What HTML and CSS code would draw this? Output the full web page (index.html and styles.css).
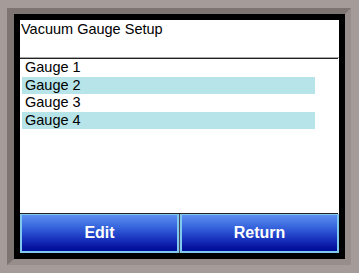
FILE: index.html
```html
<!DOCTYPE html>
<html>
<head>
<meta charset="utf-8">
<link rel="stylesheet" href="styles.css">
</head>
<body>
<div class="frame">
  <div class="bevel">
    <div class="bezel">
      <div class="screen">
        <div class="title">Vacuum Gauge Setup</div>
        <div class="list">
          <div class="row">Gauge 1</div>
          <div class="row alt">Gauge 2</div>
          <div class="row">Gauge 3</div>
          <div class="row alt">Gauge 4</div>
        </div>
        <div class="buttons">
          <div class="btn">Edit</div>
          <div class="btn">Return</div>
        </div>
      </div>
    </div>
  </div>
</div>
</body>
</html>
```
FILE: styles.css
```css
html, body {
  margin: 0;
  padding: 0;
}
body {
  width: 359px;
  height: 273px;
  overflow: hidden;
  font-family: "Liberation Sans", Arial, sans-serif;
}
.frame {
  width: 359px;
  height: 273px;
  box-sizing: border-box;
  background: #a59c99;
  padding: 8px 8px 8px 7px;
}
.bevel {
  height: 100%;
  box-sizing: border-box;
  border-style: solid;
  border-width: 6px 6px 6px 7px;
  border-color: #7e7472 #978e8b #978e8b #7e7472;
}
.bezel {
  height: 100%;
  box-sizing: border-box;
  background: #000;
  padding: 6px;
}
.screen {
  height: 100%;
  display: flex;
  flex-direction: column;
  background: #fff;
}
.title {
  height: 37px;
  padding: 1px 0 0 1px;
  box-sizing: border-box;
  font-size: 14.5px;
  line-height: 17px;
  color: #000;
  border-bottom: 1px solid #a8a8a8;
  height: 38px;
}
.list {
  flex: 1;
  border-top: 1px solid #222;
  border-bottom: 1px solid #222;
  padding: 0 23px 0 2px;
  margin-right: 1px;
}
.row {
  height: 17.5px;
  line-height: 17.5px;
  font-size: 14.5px;
  padding-left: 3px;
  color: #000;
}
.row.alt {
  background: #b7e4e9;
}
.buttons {
  height: 39px;
  display: flex;
  gap: 1px;
  background: #4a4458;
}
.btn {
  flex: 1;
  box-sizing: border-box;
  border: 2px solid #80c8ee;
  border-top-width: 1px;
  background: linear-gradient(#5b8ff0, #3563dc 35%, #1a35c0 65%, #0614a0 90%, #00109a);
  color: #fff;
  font-weight: bold;
  font-size: 16px;
  display: flex;
  align-items: center;
  justify-content: center;
}
```
